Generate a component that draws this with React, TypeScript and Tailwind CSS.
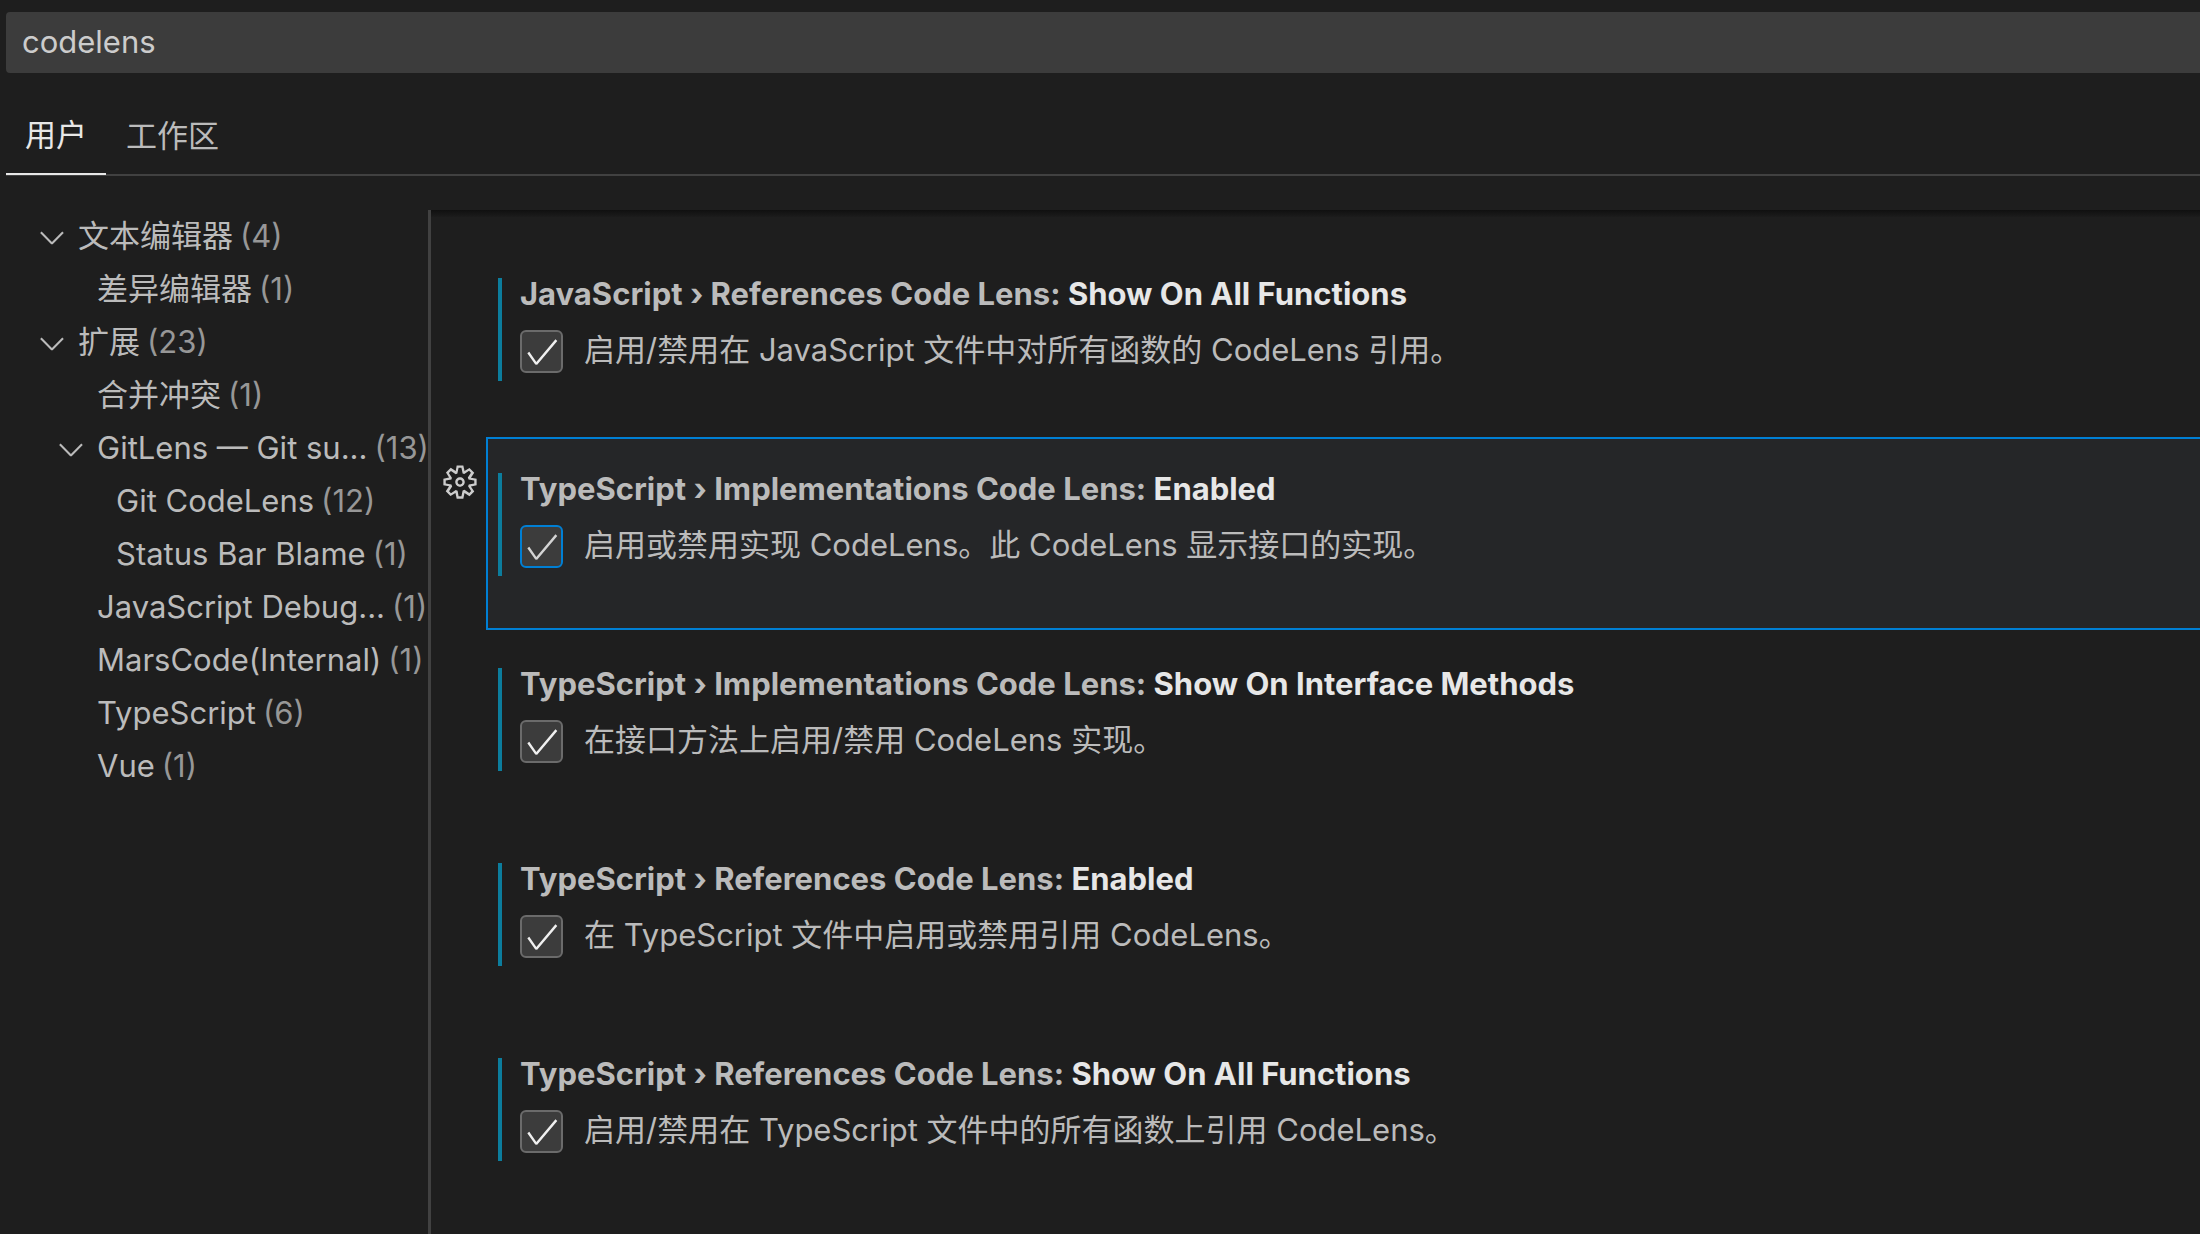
import { useState } from 'react';

interface TreeItem {
  label: string;
  count: number;
  level: number;
  open?: boolean;
}

interface Setting {
  id: string;
  category: string;
  label: string;
  description: string;
}

const tree: TreeItem[] = [
  { label: '文本编辑器', count: 4, level: 0, open: true },
  { label: '差异编辑器', count: 1, level: 1 },
  { label: '扩展', count: 23, level: 0, open: true },
  { label: '合并冲突', count: 1, level: 1 },
  { label: 'GitLens — Git su...', count: 13, level: 1, open: true },
  { label: 'Git CodeLens', count: 12, level: 2 },
  { label: 'Status Bar Blame', count: 1, level: 2 },
  { label: 'JavaScript Debug...', count: 1, level: 1 },
  { label: 'MarsCode(Internal)', count: 1, level: 1 },
  { label: 'TypeScript', count: 6, level: 1 },
  { label: 'Vue', count: 1, level: 1 },
];

const settings: Setting[] = [
  {
    id: 'js-references-functions',
    category: 'JavaScript › References Code Lens:',
    label: 'Show On All Functions',
    description: '启用/禁用在 JavaScript 文件中对所有函数的 CodeLens 引用。',
  },
  {
    id: 'ts-implementations',
    category: 'TypeScript › Implementations Code Lens:',
    label: 'Enabled',
    description: '启用或禁用实现 CodeLens。此 CodeLens 显示接口的实现。',
  },
  {
    id: 'ts-implementations-methods',
    category: 'TypeScript › Implementations Code Lens:',
    label: 'Show On Interface Methods',
    description: '在接口方法上启用/禁用 CodeLens 实现。',
  },
  {
    id: 'ts-references',
    category: 'TypeScript › References Code Lens:',
    label: 'Enabled',
    description: '在 TypeScript 文件中启用或禁用引用 CodeLens。',
  },
  {
    id: 'ts-references-functions',
    category: 'TypeScript › References Code Lens:',
    label: 'Show On All Functions',
    description: '启用/禁用在 TypeScript 文件中的所有函数上引用 CodeLens。',
  },
];

const indent = ['pl-[27px]', 'pl-[46px]', 'pl-[65px]'];

const icons = {
  chevron: 'M7.976 10.072l4.357-4.357.62.618L8.284 11h-.618L3 6.333l.619-.618 4.357 4.357z',
  check: 'M14.431 3.323l-8.47 10-.79-.036-3.35-4.77.818-.574 2.978 4.24 8.051-9.506.764.646z',
  gear: 'M9.1 4.4L8.6 2H7.4l-.5 2.4-.7.3-2-1.3-.9.8 1.3 2-.2.7-2.4.5v1.2l2.4.5.3.8-1.3 2 .8.8 2-1.3.8.3.4 2.3h1.2l.5-2.4.8-.3 2 1.3.8-.8-1.3-2 .3-.8 2.3-.4V7.4l-2.4-.5-.3-.8 1.3-2-.8-.8-2 1.3-.7-.2zM9.4 1l.5 2.4L12 2.1l2 2-1.4 2.1 2.4.4v2.8l-2.4.5L14 12l-2 2-2.1-1.4-.5 2.4H6.6l-.5-2.4L4 13.9l-2-2 1.4-2.1L1 9.4V6.6l2.4-.5L2.1 4l2-2 2.1 1.4.4-2.4h2.8zm.6 7c0 1.1-.9 2-2 2s-2-.9-2-2 .9-2 2-2 2 .9 2 2zM8 9c.6 0 1-.4 1-1s-.4-1-1-1-1 .4-1 1 .4 1 1 1z',
};

function Icon({ name, className = '' }: { name: keyof typeof icons; className?: string }) {
  return (
    <svg viewBox="0 0 16 16" fill="currentColor" aria-hidden="true" className={`h-[38px] w-[38px] shrink-0 ${className}`}>
      <path fillRule="evenodd" clipRule="evenodd" d={icons[name]} />
    </svg>
  );
}

function TreeRow({ item }: { item: TreeItem }) {
  return (
    <li>
      <button className={`flex h-[53px] w-full items-center whitespace-nowrap text-left ${indent[item.level]}`}>
        <span className="flex w-[45px] shrink-0">{item.open && <Icon name="chevron" />}</span>
        <span>{item.label}</span>
        <span className="ml-[7px] text-[#979797]">({item.count})</span>
      </button>
    </li>
  );
}

function SettingRow({ setting, selected, onSelect }: { setting: Setting; selected: boolean; onSelect: () => void }) {
  const [checked, setChecked] = useState(true);

  return (
    <li className="flex h-[195px]" onClick={onSelect}>
      <div className="w-[55px] shrink-0 pl-[10px] pt-[26px]">
        {selected && (
          <button aria-label="更多操作" className="flex text-[#cccccc]">
            <Icon name="gear" />
          </button>
        )}
      </div>
      <div
        className={`h-[193px] min-w-0 flex-1 border-y-2 border-l-2 pl-[10px] pt-[34px] ${
          selected ? 'border-[#007fd4] bg-[#252628]' : 'border-transparent'
        }`}
      >
        <div className="h-[103px] border-l-4 border-[#0c7d9d] pl-[18px]">
          <h3 className="h-[52px] whitespace-nowrap text-[31px] leading-[31px] font-bold">
            {setting.category} <span className="text-[#e7e7e7]">{setting.label}</span>
          </h3>
          <div className="flex">
            <div className="grid h-[43px] w-[43px] shrink-0 place-items-center">
              <input
                id={setting.id}
                type="checkbox"
                checked={checked}
                onChange={(e) => setChecked(e.target.checked)}
                className={`col-start-1 row-start-1 h-[43px] w-[43px] appearance-none rounded-[6px] border-2 bg-[#3c3c3c] outline-none ${
                  selected ? 'border-[#007fd4]' : 'border-[#6b6b6b]'
                }`}
              />
              {checked && (
                <Icon
                  name="check"
                  className={`pointer-events-none col-start-1 row-start-1 ${selected ? 'text-[#d4d4d4]' : 'text-[#f0f0f0]'}`}
                />
              )}
            </div>
            <label htmlFor={setting.id} className="pl-[21px] whitespace-nowrap leading-[40px]">
              {setting.description}
            </label>
          </div>
        </div>
      </div>
    </li>
  );
}

export default function App() {
  const [query, setQuery] = useState('codelens');
  const [selectedId, setSelectedId] = useState('ts-implementations');

  return (
    <div className="flex min-h-screen flex-col overflow-hidden bg-[#1e1e1e] pl-[6px] pt-3 font-[Inter,'Noto_Sans_CJK_SC',sans-serif] text-[31px] text-[#bbbbbb]">
      <input
        type="text"
        aria-label="搜索设置"
        value={query}
        onChange={(e) => setQuery(e.target.value)}
        className="h-[61px] w-full rounded-l-[4px] bg-[#3c3c3c] px-[16px] pb-[2px] text-[#cccccc] outline-none"
      />

      <div className="mt-[30px] flex h-[73px] border-b-2 border-[#414141]">
        <button className="-mb-[1px] h-[72px] border-b-2 border-[#e7e7e7] px-[19px] pb-[5px] text-[#e7e7e7]">用户</button>
        <button className="h-[72px] px-[20px] pb-[5px]">工作区</button>
      </div>

      <div className="mt-[34px] flex flex-1">
        <nav className="w-[422px] shrink-0">
          <ul>
            {tree.map((item) => (
              <TreeRow key={item.label} item={item} />
            ))}
          </ul>
        </nav>
        <main className="min-w-0 flex-1 border-l-[3px] border-[#414141]">
          <div className="h-[7px] bg-linear-to-b from-[#101010] to-[#1c1c1c]" />
          <ul className="mt-[25px]">
            {settings.map((setting) => (
              <SettingRow
                key={setting.id}
                setting={setting}
                selected={setting.id === selectedId}
                onSelect={() => setSelectedId(setting.id)}
              />
            ))}
          </ul>
        </main>
      </div>
    </div>
  );
}
